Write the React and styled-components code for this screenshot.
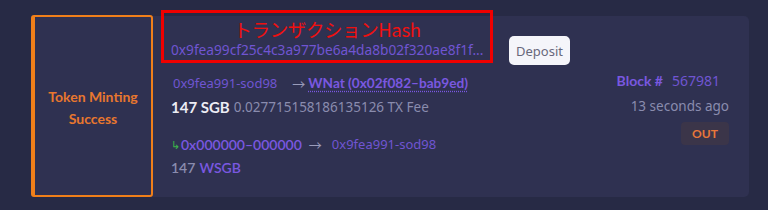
import styled, { createGlobalStyle } from "styled-components";

const GlobalStyle = createGlobalStyle`
    html, body {
        margin: 0;
        padding: 0;
        background: #272a45;
    }
    body {
        font-family: "Noto Sans", "Noto Sans CJK JP", sans-serif;
    }
`

export default function App() {
    return (
        <Page>
            <GlobalStyle />
            <Card>
                <StatusBox>
                    <StatusText>Token Minting</StatusText>
                    <StatusText>Success</StatusText>
                </StatusBox>
                <Details>
                    <TopRow>
                        <HashBlock>
                            <HashTitle>トランザクションHash</HashTitle>
                            <HashLink>0x9fea99cf25c4c3a977be6a4da8b02f320ae8f1f...</HashLink>
                        </HashBlock>
                        <TypeTag>Deposit</TypeTag>
                    </TopRow>
                    <Line $top={9}>
                        <Addr>0x9fea991-sod98</Addr>
                        <Arrow $gap={15}>→</Arrow>
                        <Contract>WNat (0x02f082–bab9ed)</Contract>
                    </Line>
                    <Line $top={6}>
                        <Amount>147 SGB</Amount>
                        <Fee>0.027715158186135126 TX Fee</Fee>
                    </Line>
                    <Line $top={19}>
                        <SubIcon>↳</SubIcon>
                        <FromAddr>0x000000–000000</FromAddr>
                        <Arrow $gap={7}>→</Arrow>
                        <Addr style={{ marginLeft: 10 }}>0x9fea991-sod98</Addr>
                    </Line>
                    <Line $top={5}>
                        <TokenAmount>147</TokenAmount>
                        <TokenName>WSGB</TokenName>
                    </Line>
                </Details>
                <Meta>
                    <BlockRow>
                        <BlockLabel>Block #</BlockLabel>
                        <BlockNo>567981</BlockNo>
                    </BlockRow>
                    <TimeAgo>13 seconds ago</TimeAgo>
                    <DirBadge>OUT</DirBadge>
                </Meta>
            </Card>
        </Page>
    );
}

const Page = styled.div`
    padding: 16px 19px 13px 31px;
`

const Card = styled.div`
    display: flex;
    height: 181px;
    background: #2f3151;
    border-radius: 5px;
`

const StatusBox = styled.div`
    box-sizing: border-box;
    width: 122px;
    margin-top: -1px;
    height: 182px;
    display: flex;
    flex-direction: column;
    align-items: center;
    justify-content: center;
    border: 2px solid #f07f1a;
    border-left-width: 4px;
    border-radius: 3px;
    padding-top: 3px;
`

const StatusText = styled.div`
    font-family: "Lato", sans-serif;
    font-weight: 700;
    font-size: 14px;
    line-height: 22px;
    color: #e8772e;
`

const Details = styled.div`
    display: flex;
    flex-direction: column;
    padding: 1px 0 0 18px;
    flex: 1;
`

const TopRow = styled.div`
    display: flex;
    align-items: flex-start;
`

const HashBlock = styled.div`
    position: relative;
    width: 312px;
    display: flex;
    flex-direction: column;
    align-items: flex-start;

    &::after {
        content: "";
        position: absolute;
        top: -7px;
        left: -10px;
        right: -10px;
        bottom: -4px;
        border: 3px solid #f00000;
        pointer-events: none;
    }
`

const HashTitle = styled.div`
    align-self: stretch;
    text-align: center;
    font-family: "Noto Sans CJK JP", sans-serif;
    font-size: 18.5px;
    letter-spacing: -0.4px;
    line-height: 24px;
    color: #f01010;
`

const HashLink = styled.div`
    font-size: 13.7px;
    line-height: 18px;
    color: #7055d2;
    white-space: nowrap;
`

const TypeTag = styled.div`
    margin: 19px 0 0 26px;
    height: 29px;
    padding: 0 7px;
    display: flex;
    align-items: center;
    background: #f5f5fa;
    border-radius: 5px;
    font-size: 13px;
    color: #68687a;
`

const Line = styled.div`
    display: flex;
    align-items: center;
    height: 18px;
    margin-top: ${p => p.$top}px;
    white-space: nowrap;
`

const Addr = styled.span`
    font-size: 13px;
    color: #7055d2;
    margin-left: 2px;
`

const Arrow = styled.span`
    margin-left: ${p => p.$gap}px;
    font-size: 13px;
    color: #9a9cba;
`

const Contract = styled.span`
    margin-left: 3px;
    font-family: "Lato", sans-serif;
    font-weight: 700;
    font-size: 13.6px;
    color: #7a58e0;
    text-decoration: underline dotted;
    text-underline-offset: 3px;
`

const Amount = styled.span`
    font-family: "Lato", sans-serif;
    font-weight: 700;
    font-size: 15px;
    color: #ececf4;
`

const Fee = styled.span`
    margin-left: 4px;
    font-size: 13.5px;
    color: #8a8cae;
`

const SubIcon = styled.span`
    font-size: 11px;
    color: #3cb44a;
    width: 10px;
`

const FromAddr = styled.span`
    font-family: "Lato", sans-serif;
    font-weight: 600;
    font-size: 14px;
    color: #7a58e0;
`

const TokenAmount = styled.span`
    font-family: "Lato", sans-serif;
    font-weight: 600;
    font-size: 14px;
    color: #8a8cae;
`

const TokenName = styled.span`
    margin-left: 4px;
    font-family: "Lato", sans-serif;
    font-weight: 600;
    font-size: 14px;
    color: #7a58e0;
`

const Meta = styled.div`
    display: flex;
    flex-direction: column;
    align-items: flex-end;
    padding: 55px 20px 0 0;
`

const BlockRow = styled.div`
    display: flex;
    align-items: center;
    height: 18px;
    margin-right: 9px;
    gap: 9px;
`

const BlockLabel = styled.span`
    font-family: "Lato", sans-serif;
    font-weight: 700;
    font-size: 14px;
    color: #7a58e0;
`

const BlockNo = styled.span`
    font-size: 14px;
    color: #7055d2;
`

const TimeAgo = styled.div`
    margin-top: 8px;
    font-size: 13.5px;
    line-height: 18px;
    color: #8a8cae;
`

const DirBadge = styled.div`
    margin-top: 7px;
    width: 48px;
    height: 23px;
    display: flex;
    align-items: center;
    justify-content: center;
    background: #3b3549;
    border-radius: 4px;
    font-family: "Lato", sans-serif;
    font-weight: 700;
    font-size: 12px;
    color: #e8773a;
`
